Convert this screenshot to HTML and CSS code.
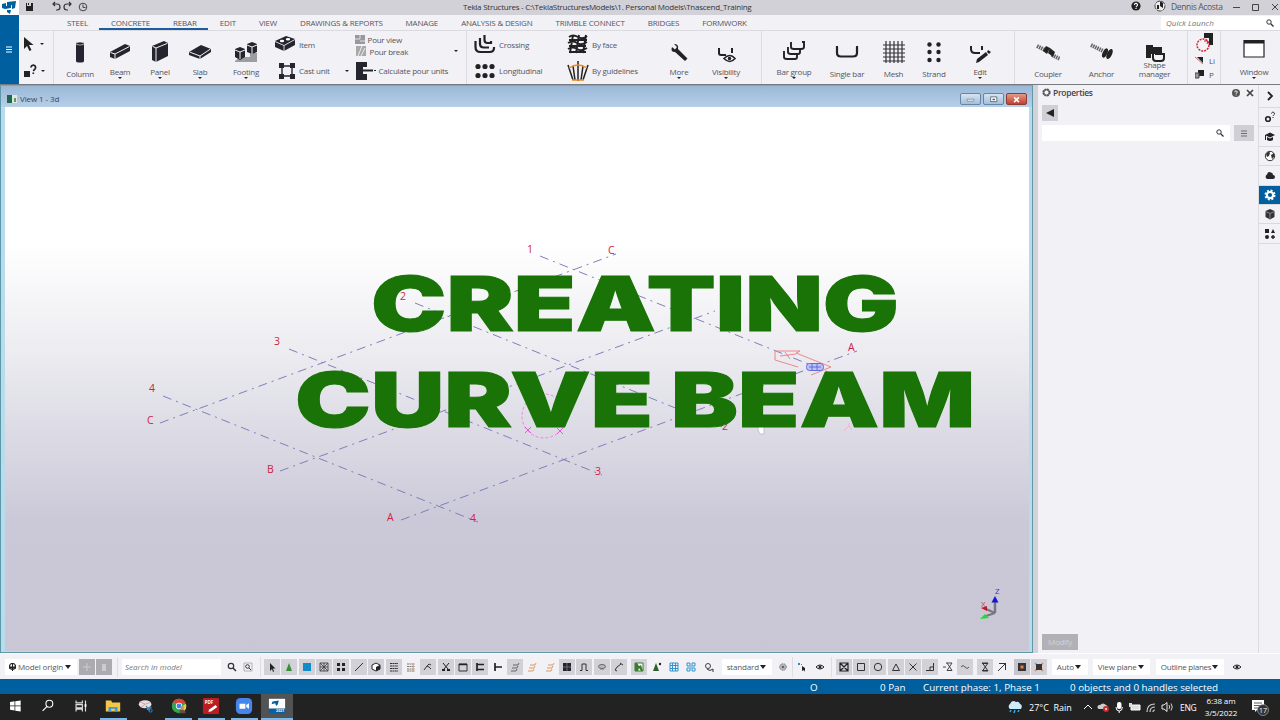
FILE: index.html
```html
<!DOCTYPE html>
<html lang="en">
  <head>
    <meta charset="UTF-8" />
    <meta name="viewport" content="width=device-width, initial-scale=1.0" />
    <title>Tekla Structures</title>
    <link rel="stylesheet" href="styles.css">
  </head>
  <body>
    <!-- Title bar -->
    <header class="titlebar">
      <svg class="logo" viewBox="0 0 19 15"><rect width="19" height="15" fill="#fff"/><path d="M7 2l9-1-1 7-3 1V5L7 6zM2 4l4-1v3l5-1v3l-6 1-3-1zM7 10h4l-1 4-3-2z" fill="#00609f"/></svg>
      <svg class="quick-icons" viewBox="0 0 72 12"><path d="M7 2h1v3h4V2h2v8H7zM9 2h1v2H9z" fill="#222"/><path d="M34 3h4a3 3 0 0 1 0 6h-1M36 1l-2 2 2 2M52 3h-4a3 3 0 0 0 0 6h1M50 1l2 2-2 2" fill="none" stroke="#333" stroke-width="1.2"/><circle cx="64" cy="6" r="3.800" fill="none" stroke="#444"/><path d="M64 3.500v3h2.500" fill="none" stroke="#444"/></svg>
      <div class="app-title">Tekla Structures - C:\TeklaStructuresModels\1. Personal Models\Tnascend_Training</div>
      <div class="account">
        <svg width="10" height="10" viewBox="0 0 10 10"><circle cx="5" cy="5" r="4.600" fill="#222"/><path d="M3.500 4a1.500 1.500 0 1 1 2 1.300l-.5.8M5 7v1" fill="none" stroke="#fff" stroke-width="1.100"/></svg>
        <svg width="12" height="12" viewBox="0 0 12 12"><circle cx="6" cy="6" r="5" fill="#eee" stroke="#444" stroke-dasharray="5 1"/><path d="M6 1l3 2v5L6 6zM3 5h2v4H3z" fill="#222"/></svg>
        <span>Dennis Acosta</span>
      </div>
      <svg class="win-controls" viewBox="0 0 50 12"><path d="M3 5.500h7M22.500 2.500h6v6h-6zM42 2l6 6M48 2l-6 6" fill="none" stroke="#333" stroke-width=".9"/></svg>
    </header>

    <!-- Ribbon -->
    <div class="ribbon">
      <div class="file-menu"><svg width="7" height="7" viewBox="0 0 7 7"><path d="M0 1h6M0 3.500h6M0 6h6" stroke="#fff"/></svg></div>
      <div class="ribbon-main">
        <nav class="tabs">
          <span>STEEL</span><span class="on">CONCRETE</span><span class="on">REBAR</span><span>EDIT</span><span>VIEW</span><span>DRAWINGS &amp; REPORTS</span><span>MANAGE</span><span>ANALYSIS &amp; DESIGN</span><span>TRIMBLE CONNECT</span><span>BRIDGES</span><span>FORMWORK</span>
          <div class="quick-launch">Quick Launch<svg width="8" height="8" viewBox="0 0 8 8"><circle cx="3" cy="3" r="2.200" fill="none" stroke="#333"/><path d="M4.700 4.700L7.500 7.500" stroke="#333" stroke-width="1.300"/></svg></div>
        </nav>
        <div class="tools">
          <div class="group select-group">
            <div class="row"><svg width="12" height="16" viewBox="0 0 12 16"><path d="M1 1v12l3-3 2.500 5 2-1L6 9h4.500z" fill="#222"/></svg><i class="caret"></i></div>
            <div class="row"><svg width="15" height="16" viewBox="0 0 15 16"><path d="M1 8h6v6H1z" fill="#222"/><path d="M8 4.500a2.300 2.300 0 1 1 3.500 2l-1.200 1.500M10.300 9.500v1.500" fill="none" stroke="#222" stroke-width="1.700"/></svg><i class="caret"></i></div>
          </div>
          <div class="group parts-group">
            <div class="tool w40"><svg class="ico" viewBox="0 0 24 24"><path d="M8 4.500h8V21H8z" fill="#25252f"/><ellipse cx="12" cy="21" rx="4" ry="1.500" fill="#25252f"/><ellipse cx="12" cy="3.500" rx="4" ry="1.500" fill="#25252f" stroke="#f2f1f6" stroke-width=".6"/></svg><span>Column</span></div>
            <div class="tool w40 drop"><svg class="ico" viewBox="0 0 24 24"><path d="M2 12l15-8 5 2v5L7 19l-5-2z" fill="#25252f"/><path d="M2.500 12.500l4.500 1.500L21.500 6.500M7 14v5" stroke="#f2f1f6" fill="none"/></svg><span>Beam</span></div>
            <div class="tool w40 drop"><svg class="ico" viewBox="0 0 24 24"><path d="M4 6l12-5 4 2v13L8 22l-4-2z" fill="#25252f"/><path d="M4.500 6.300L8 8l11.500-4.700M8 8v14" stroke="#f2f1f6" fill="none"/></svg><span>Panel</span></div>
            <div class="tool w40 drop"><svg class="ico" viewBox="0 0 24 24"><path d="M1 12l12-7 10 4v3l-11 7-11-4z" fill="#25252f"/><path d="M1.500 12l10.500 4L22.500 9M12 16v3" stroke="#f2f1f6" fill="none"/></svg><span>Slab</span></div>
            <div class="tool w52 drop"><svg class="ico" viewBox="0 0 24 24"><path d="M1 21l5-4h10V13h7v9H1z" fill="#9c9ca3"/><path d="M1 9l5-2 5 2v8l-5 3-5-3zM13 4l5-2 5 2v8l-5 2-5-2z" fill="#25252f"/><path d="M1 10l5 2 5-2M6 12v7M13 5l5 2 5-2M18 7v7" fill="none" stroke="#f2f1f6"/></svg><span>Footing</span></div>
            <div class="stack item-stack">
              <div class="row"><svg width="22" height="18" viewBox="0 0 22 18"><path d="M1 6l11-5 9 3v6l-11 6-9-4z" fill="#25252f"/><path d="M1 6.500l9 4 11-6M10 10.500v6" stroke="#fff" fill="none" stroke-width=".8"/><ellipse cx="8" cy="6" rx="2.200" ry="1.200" fill="#fff"/><ellipse cx="14" cy="4.200" rx="2.200" ry="1.200" fill="#fff"/></svg><span>Item</span></div>
              <div class="row cast"><svg width="18" height="18" viewBox="0 0 18 18"><path d="M4 4h10v10H4z" fill="none" stroke="#25252f" stroke-width="1.400"/><path d="M1 1h5v5H1zM12 1h5v5h-5zM1 12h5v5H1zM12 12h5v5h-5z" fill="#25252f"/></svg><span>Cast unit</span><i class="caret"></i></div>
            </div>
            <div class="stack pour-stack">
              <div class="pour-rows">
                <div class="mini"><svg width="10" height="10" viewBox="0 0 10 10"><path d="M0 1h10v9H0z" fill="#999"/><path d="M0 5h5V1M5 7h5" stroke="#ddd" fill="none"/></svg><span>Pour view</span></div>
                <div class="mini second"><svg width="10" height="10" viewBox="0 0 10 10"><path d="M0 0h10v10H0z" fill="#a8a8a8"/><path d="M2 10L6 0M5 10l4-8" stroke="#eee" fill="none"/></svg><span>Pour break</span><i class="caret"></i></div>
              </div>
              <div class="row calc"><svg width="20" height="20" viewBox="0 0 20 20"><path d="M0 1h11v5H7v7h4v6H0z" fill="#25252f"/><path d="M6 9.500h11" stroke="#25252f" stroke-width="2"/><path d="M18 9.500h2" stroke="#25252f"/></svg><span>Calculate pour units</span></div>
            </div>
          </div>
          <div class="group rebar-group">
            <div class="stack cross-stack">
              <div class="row"><svg width="22" height="20" viewBox="0 0 22 20"><path d="M1.500 7v6q0 5 5 5h9q4.500 0 4.500-4v-1M6 4v6q0 3.500 4 3.500h5M10.500 1v5q0 3 3 3h3.500v-2" fill="none" stroke="#222" stroke-width="2.200"/></svg><span>Crossing</span></div>
              <div class="row"><svg width="22" height="18" viewBox="0 0 22 18"><g fill="#222"><circle cx="4" cy="4.500" r="2.600"/><circle cx="11" cy="4.500" r="2.600"/><circle cx="18" cy="4.500" r="2.600"/><circle cx="4" cy="13.500" r="2.600"/><circle cx="11" cy="13.500" r="2.600"/><circle cx="18" cy="13.500" r="2.600"/></g></svg><span>Longitudinal</span></div>
            </div>
            <div class="stack face-stack">
              <div class="row"><svg width="22" height="20" viewBox="0 0 22 20"><path d="M2 3q4-3 9 0t9-1M1 9q5-3 9 0t10-1M1 15q5-3 9 0t10-1M6 1L3 19M12 1L9 19M19 1l-3 18M2 6h18M2 12h17M2 18h17" fill="none" stroke="#222" stroke-width="1.900"/></svg><span>By face</span></div>
              <div class="row"><svg width="22" height="22" viewBox="0 0 22 22"><path d="M1 5l5 15M21 5l-5 15M11 1v20M6 6l2 14M16 6l-2 14" stroke="#222" stroke-width="1.500"/><path d="M2 8q9-6 18 0M5 20h12" stroke="#ef8b1d" stroke-width="1.500" fill="none"/></svg><span>By guidelines</span></div>
            </div>
            <div class="tool w40 drop"><svg class="ico" viewBox="0 0 24 24"><path d="M5 7q-2 5 3 5l10 9 2.500-2.500L11 9q1-5-4-5l3 3-2 2.500z" fill="#222"/></svg><span>More</span></div>
            <div class="tool w54 drop"><svg class="ico" viewBox="0 0 24 24"><path d="M5 8v5q0 2 2 2h5M18 8v5" stroke="#222" stroke-width="2" fill="none"/><path d="M10 18.500q6-6 11 0-5 6-11 0z" fill="#fff" stroke="#222" stroke-width="1.600"/><circle cx="15.500" cy="18.500" r="1.800" fill="#222"/></svg><span>Visibility</span></div>
          </div>
          <div class="group bars-group">
            <div class="tool w56 drop"><svg class="ico" viewBox="0 0 24 24"><path d="M2 11v6q0 2 3 2h8q2 0 2-2v-3M6 7v5q0 2 3 2h7q2 0 2-2V9M9 2v5q0 2 3 2h7q3 0 3-2V2h-2" fill="none" stroke="#222" stroke-width="1.900"/></svg><span>Bar group</span></div>
            <div class="tool w50"><svg class="ico" viewBox="0 0 24 24"><path d="M3 7H2v6q0 3.500 4 3.500h12q4 0 4-3.500V7h-1" fill="none" stroke="#222" stroke-width="2.200"/></svg><span>Single bar</span></div>
            <div class="tool w43"><svg class="ico" viewBox="0 0 24 24"><path d="M1 5h22M1 9h22M1 13h22M1 17h22M1 21h22M4 1v22M8 1v22M12 1v22M16 1v22M20 1v22" stroke="#333" stroke-width="1.200"/></svg><span>Mesh</span></div>
            <div class="tool w38"><svg class="ico" viewBox="0 0 24 24"><g fill="#222"><circle cx="7.500" cy="4.500" r="2.200"/><circle cx="16.500" cy="4.500" r="2.200"/><circle cx="7.500" cy="12" r="2.200"/><circle cx="16.500" cy="12" r="2.200"/><circle cx="7.500" cy="20" r="2.200"/><circle cx="16.500" cy="20" r="2.200"/></g></svg><span>Strand</span></div>
            <div class="tool w54 drop"><svg class="ico" viewBox="0 0 24 24"><path d="M3 6v3q0 4 4 4h5M14 6v4" stroke="#222" stroke-width="2" fill="none"/><path d="M8 23l1-4 9-7 2 3-9 7zM20 10l3 2-2 2-2-2z" fill="#222"/></svg><span>Edit</span></div>
          </div>
          <div class="group joint-group">
            <div class="tool w54"><svg class="ico" viewBox="0 0 24 24"><path d="M1 6l8 4M16 15l8 4" stroke="#666" stroke-width="4" stroke-dasharray="1.500 .8"/><path d="M7 11l3-5 4 2-3 6zM12 13l2-5 5 4-2 5z" fill="#222"/></svg><span>Coupler</span></div>
            <div class="tool w53"><svg class="ico" viewBox="0 0 24 24"><path d="M1 5l12 6" stroke="#666" stroke-width="4" stroke-dasharray="1.500 .8"/><ellipse cx="15" cy="13" rx="2.300" ry="5" transform="rotate(25 15 13)" fill="#222"/><ellipse cx="19.500" cy="14" rx="2.500" ry="5.500" transform="rotate(25 19.500 14)" fill="#222"/></svg><span>Anchor</span></div>
            <div class="tool w53 two-line"><svg class="ico" viewBox="0 0 24 24"><path d="M3 5h7v2h9v8H9v3H3z" fill="#222"/><path d="M10 14v4q0 3 3 3h5q3 0 3-3v-4h-2" fill="none" stroke="#f2f1f6" stroke-width="4"/><path d="M10 14v4q0 3 3 3h5q3 0 3-3v-4h-2" fill="none" stroke="#222" stroke-width="2"/></svg><span>Shape<br>manager</span></div>
          </div>
          <div class="group cut-group">
            <svg width="20" height="22" viewBox="0 0 20 22"><path d="M9 1h9v12h-4V6H9z" fill="#222"/><circle cx="8" cy="13" r="6" fill="#f7f2f5" stroke="#cf2736" stroke-width="1.500" stroke-dasharray="2 1"/><path d="M9 9h4l-1 3" stroke="#cf2736" fill="none"/></svg>
            <div class="cut-row"><svg width="9" height="9" viewBox="0 0 9 9"><path d="M2 1h6v6z" fill="#222"/><path d="M0 1l8 7" stroke="#c66"/></svg><span>Li</span></div>
            <div class="cut-row"><svg width="9" height="9" viewBox="0 0 9 9"><path d="M3 0h6v6H3z" fill="#222"/><path d="M0 3h4v5H0z" fill="#999" stroke="#444"/></svg><span>P</span></div>
          </div>
          <div class="group window-group">
            <div class="tool w58 drop"><svg class="ico" viewBox="0 0 24 24"><path d="M2 0h20v17H2z" fill="#fff" stroke="#222" stroke-width="1.200"/><path d="M2 0h20v3.500H2z" fill="#222"/></svg><span>Window</span></div>
          </div>
        </div>
      </div>
    </div>

    <!-- Workspace -->
    <main class="workspace">
      <section class="view-window">
        <div class="view-title">
          <svg width="11" height="8" viewBox="0 0 11 8"><path d="M0 0h10v8H0z" fill="#dce9e4"/><path d="M0 0h5v8H0z" fill="#27644f"/><path d="M7 3h2v4H7z" fill="#5a9a60"/></svg>
          <span>View 1 - 3d</span>
          <div class="view-buttons">
            <b><svg viewBox="0 0 20 12"><path d="M6.500 5.500h7v2h-7z" fill="#fff" stroke="#566" stroke-width=".6"/></svg></b>
            <b><svg viewBox="0 0 20 12"><path d="M7 3h6.500v5H7z" fill="#fff" stroke="#456" stroke-width=".8"/><path d="M9 5h2.500v1.500H9z" fill="#456"/></svg></b>
            <b class="close"><svg viewBox="0 0 20 12"><path d="M7.500 3.500l5 5M12.500 3.500l-5 5" stroke="#fff" stroke-width="1.700"/></svg></b>
          </div>
        </div>
        <svg class="canvas" viewBox="5 107 1024 544">
          <!-- grid lines -->
          <g class="grid-lines">
            <path d="M163 396L478 522M289 349L602 475M415 303L725 428M540 256L848 380"/>
            <path d="M160 423L616 254M280 471L715 311M401 520L857 351"/>
          </g>
          <g class="grid-labels">
            <text x="149" y="392">4</text><text x="274" y="345">3</text><text x="400" y="300">2</text><text x="527" y="253">1</text>
            <text x="147" y="424">C</text><text x="267" y="473">B</text><text x="387" y="521">A</text>
            <text x="608" y="254">C</text><text x="848" y="351">A</text><text x="470" y="522">4</text><text x="595" y="475">3</text><text x="722" y="430">2</text>
          </g>
          <!-- work area arrow and curve picks -->
          <path d="M798 367L775 360V351H800L796 353L831 367L811 375M780 356L796 354M785 352L790 359" fill="none" stroke="#ee8890"/>
          <rect x="806.500" y="363.500" width="17" height="7" rx="3" fill="#bcc3f3" stroke="#646be0"/>
          <path d="M809 367h12M812 364v6M817 364v6" stroke="#5259d9" stroke-width=".8"/>
          <circle cx="544" cy="416" r="22" fill="none" stroke="#e08bd9" stroke-dasharray="3 2"/>
          <path d="M525 427l6 6M531 427l-6 6M557 428l6 6M563 428l-6 6M525 402l5-3" stroke="#ec55e2"/>
          <path d="M849 423v3l-5 5M849 426l3 4" stroke="#eeb6c2" fill="none"/>
          <path d="M758 426h6v8h-4l-2-4z" fill="#fff" stroke="#aaa" stroke-width=".6"/>
          <!-- headline -->
          <g class="headline">
            <text x="371" y="330.500" textLength="528" lengthAdjust="spacingAndGlyphs">CREATING</text>
            <text x="295" y="426.500" textLength="358" lengthAdjust="spacingAndGlyphs">CURVE</text>
            <text x="671" y="426.500" textLength="304" lengthAdjust="spacingAndGlyphs">BEAM</text>
          </g>
          <!-- axes -->
          <path d="M995 613V601" stroke="#77777f" stroke-width="2.500"/>
          <path d="M995 613l-9-4M995 613l-9 3" stroke="#77777f" stroke-width="2"/>
          <path d="M995 596l3.500 6.500h-7z" fill="#1414d2"/><path d="M980 619l5-5 4 4z" fill="#25dc35"/><path d="M981 608l6-2v5z" fill="#c01825"/>
          <text x="995" y="594" class="axis z">Z</text><text x="981" y="607" class="axis x">X</text>
        </svg>
      </section>

      <aside class="properties">
        <div class="panel-title">
          <svg width="9" height="9" viewBox="0 0 9 9"><circle cx="4.500" cy="4.500" r="3.300" fill="none" stroke="#555" stroke-width="1.600" stroke-dasharray="2 .6"/><circle cx="4.500" cy="4.500" r="2.600" fill="none" stroke="#555"/></svg>
          <strong>Properties</strong>
          <svg width="8" height="8" viewBox="0 0 10 10"><circle cx="5" cy="5" r="5" fill="#555"/><path d="M3.500 4a1.500 1.500 0 1 1 2 1.300l-.5.8M5 7v1" fill="none" stroke="#fff" stroke-width="1.200"/></svg>
          <svg width="8" height="8" viewBox="0 0 8 8"><path d="M1 1l6 6M7 1L1 7" stroke="#444" stroke-width="1.700"/></svg>
        </div>
        <div class="back"><svg width="8" height="8" viewBox="0 0 8 8"><path d="M0 4l8-4v8z" fill="#222"/></svg></div>
        <div class="panel-search">
          <div class="search-box"><svg width="8" height="8" viewBox="0 0 8 8"><circle cx="3" cy="3" r="2.200" fill="none" stroke="#333"/><path d="M4.700 4.700L7.500 7.500" stroke="#333" stroke-width="1.300"/></svg></div>
          <div class="list-button"><svg width="6" height="7" viewBox="0 0 6 7"><path d="M0 1h6M0 3.500h6M0 6h6" stroke="#555" stroke-width=".8"/></svg></div>
        </div>
        <div class="modify">Modify</div>
      </aside>

      <div class="side-tabs">
        <b><svg viewBox="0 0 12 12"><path d="M4 2l4 4-4 4" fill="none" stroke="#222" stroke-width="1.800"/></svg></b>
        <b><svg viewBox="0 0 12 12"><circle cx="4" cy="8" r="2.300" fill="none" stroke="#222" stroke-width="1.600"/><path d="M7.500 2.500a1.500 1.500 0 1 1 2.200 1.500l-.7.8M9 6v1" fill="none" stroke="#222"/></svg></b>
        <b><svg viewBox="0 0 12 12"><path d="M1 4l5-2.500L11 4 6 6.500zM3 6l3 1.500L9 6v3q-3 2-6 0zM1 4h1v5H1z" fill="#222"/></svg></b>
        <b><svg viewBox="0 0 12 12"><circle cx="6" cy="6" r="4.700" fill="#fff" stroke="#333"/><path d="M2 4q3-4 4-1l-1 3-2 1zM7 5l3-2v4L8 9z" fill="#333"/></svg></b>
        <b><svg viewBox="0 0 12 12"><path d="M3 10a2.500 2.500 0 0 1 0-4.500q1-3.500 4-2 2 0 2 2.500 2 0 2 2t-2 2z" fill="#25252f"/></svg></b>
        <b class="active"><svg viewBox="0 0 12 12"><circle cx="6" cy="6" r="4.500" fill="none" stroke="#fff" stroke-width="2" stroke-dasharray="2 1.530"/><circle cx="6" cy="6" r="3.100" fill="none" stroke="#fff" stroke-width="2"/></svg></b>
        <b><svg viewBox="0 0 12 12"><path d="M6 1l4.500 2v6L6 11.500 1.500 9V3z" fill="#333"/><path d="M1.500 3.500L6 5.500l4.500-2M6 5.500v6" stroke="#aaa" stroke-width=".7" fill="none"/></svg></b>
        <b><svg viewBox="0 0 12 12"><path d="M1 1h4v4H1zM9 1l2 4H7zM8.300 7h1.400v1.300H11v1.400H9.700V11H8.300V9.700H7V8.300h1.300z" fill="#222"/><circle cx="3" cy="9" r="2" fill="#222"/></svg></b>
      </div>
    </main>

    <!-- Selection and snapping toolbar -->
    <div class="bottom-tools">
      <div class="field origin"><svg width="7" height="8" viewBox="0 0 7 8"><circle cx="3.500" cy="3.500" r="3" fill="none" stroke="#222" stroke-width="1.200"/><path d="M0 3.500h7v2H0zM3 1h1v7H3z" fill="#222"/></svg>Model origin<i class="caret"></i></div>
      <b class="grey"><svg viewBox="0 0 16 16"><path d="M8 4v8M4 8h8" stroke="#ccc"/></svg></b>
      <b class="grey"><svg viewBox="0 0 16 16"><path d="M6 5h4v7H6z" fill="#ccc"/></svg></b>
      <i class="sep"></i>
      <div class="field model-search">Search in model</div>
      <b class="plain"><svg viewBox="0 0 16 16"><circle cx="7" cy="7" r="2.700" fill="none" stroke="#333" stroke-width="1.200"/><path d="M9 9l3 3" stroke="#333" stroke-width="1.500"/></svg></b>
      <b class="plain"><svg viewBox="0 0 16 16"><path d="M4 4h8v8H4z" fill="none" stroke="#999" stroke-width=".7"/><circle cx="7.500" cy="7.500" r="1.800" fill="none" stroke="#333"/><path d="M9 9l2 2" stroke="#333"/></svg></b>
      <i class="sep wide"></i>
      <div class="buttons">
        <b><svg viewBox="0 0 16 16"><path d="M6 4v8l2-2 1 3 1-.6L9 9.500h2.500z" fill="#222"/></svg></b>
        <b><svg viewBox="0 0 16 16"><path d="M8 4l3 8H5z" fill="#3c8b35"/></svg></b>
        <b><svg viewBox="0 0 16 16"><path d="M4 4h8v8H4z" fill="#148bc9"/></svg></b>
        <b><svg viewBox="0 0 16 16"><path d="M4 4h8v8H4zM4 8h8M8 4v8M4 4l8 8M12 4l-8 8" fill="none" stroke="#444" stroke-width=".9"/></svg></b>
        <b><svg viewBox="0 0 16 16"><path d="M4 4h3v3H4zM9 4h3v3H9zM4 9h3v3H4zM9 9h3v3H9z" fill="#222"/></svg></b>
        <b><svg viewBox="0 0 16 16"><path d="M4 12l8-8" stroke="#333"/></svg></b>
        <b><svg viewBox="0 0 16 16"><path d="M8 4l4 2v4l-4 2-4-2V6z" fill="#fff" stroke="#222"/><path d="M8 8l4-2v4l-4 2z" fill="#222"/></svg></b>
        <b><svg viewBox="0 0 16 16"><path d="M4 4.500h8M4 7h8M4 9.500h8M4 12h8" stroke="#333" stroke-dasharray="2 .4"/></svg></b>
        <b class="plain"><svg viewBox="0 0 16 16"><path d="M4 5h8M4 7.500h8M4 10h8M4 12h8" stroke="#777" stroke-dasharray="2 .5"/><path d="M10 5v7" stroke="#eba56b"/></svg></b>
        <b><svg viewBox="0 0 16 16"><path d="M4 11l3-4 2 1 2 2M7 7l2-2 2 1" stroke="#333" fill="none"/></svg></b>
        <b><svg viewBox="0 0 16 16"><path d="M5 4l5 6M11 4l-5 6" stroke="#222"/><path d="M4 10h3v2H4zM9 10h3v2H9z" fill="#222"/></svg></b>
        <b><svg viewBox="0 0 16 16"><path d="M4 5h8v7H4z" fill="none" stroke="#333"/><path d="M4 5.500h8" stroke="#222" stroke-width="1.500"/></svg></b>
        <b><svg viewBox="0 0 16 16"><path d="M5 4v8M5 5.500h7M5 10.500h7" stroke="#222" stroke-width="1.700"/></svg></b>
        <b class="plain"><svg viewBox="0 0 16 16"><path d="M5 4v8M5 8h7" stroke="#222" stroke-width="1.700"/></svg></b>
        <b><svg viewBox="0 0 16 16"><path d="M12 4l-1 2H6M11 7l-1 2H5M10 10l-1 2H4" stroke="#666" fill="none"/></svg></b>
        <b class="plain"><svg viewBox="0 0 16 16"><path d="M12 4l-1 2H6M11 7l-1 2H5M10 10l-1 2H4" stroke="#e1975d" fill="none"/></svg></b>
        <b class="plain"><svg viewBox="0 0 16 16"><path d="M12 4l-1 2H6M11 7l-1 2H5M10 10l-1 2H4" stroke="#e1975d" fill="none"/></svg></b>
        <b><svg viewBox="0 0 16 16"><path d="M4 4h8v8H4z" fill="#25252f"/><path d="M4 8h8M8 4v8" stroke="#888" stroke-width=".7"/></svg></b>
        <b><svg viewBox="0 0 16 16"><path d="M4 11.500h2V5h4v6.500h2" stroke="#333" fill="none"/></svg></b>
        <b><svg viewBox="0 0 16 16"><ellipse cx="8" cy="7.500" rx="3.500" ry="2" fill="#bbb" stroke="#666"/><path d="M6 10h4" stroke="#777"/></svg></b>
        <b><svg viewBox="0 0 16 16"><path d="M4 11l2-3 4-3M4 11l2 1M9 4l3 2" stroke="#333" fill="none"/></svg></b>
      </div>
      <div class="buttons second-set">
        <b><svg viewBox="0 0 16 16"><path d="M4 4h8v8H4z" fill="#fff" stroke="#3a7c2e"/><path d="M4 12V4h2l2 3 2-1 2 6h-2l-2-3-1 3z" fill="#3a7c2e"/></svg></b>
        <b class="plain"><svg viewBox="0 0 16 16"><path d="M7 4l3 8H4z" fill="#315e2e"/><circle cx="11" cy="5" r="1.200" fill="#222"/></svg></b>
        <b class="plain"><svg viewBox="0 0 16 16"><path d="M4 4h8v8H4zM6.500 4v8M9.500 4v8M4 6.500h8M4 9.500h8" fill="none" stroke="#3293cf"/></svg></b>
        <b class="plain"><svg viewBox="0 0 16 16"><path d="M4 4h3v3H4zM9 4h3v3H9zM4 9h3v3H4zM9 9h3v3H9zM7 8h2" fill="none" stroke="#3293cf"/></svg></b>
        <b class="plain"><svg viewBox="0 0 16 16"><circle cx="7" cy="7" r="2.500" fill="none" stroke="#444"/><path d="M6 10q3 3 6 0v3" fill="none" stroke="#333"/></svg></b>
      </div>
      <div class="field standard">standard<i class="caret"></i></div>
      <b class="plain"><svg viewBox="0 0 16 16"><circle cx="8" cy="8" r="3.300" fill="#bbb" stroke="#777" stroke-dasharray="1.500 .8"/><circle cx="8" cy="8" r="1.300" fill="#666"/></svg></b>
      <i class="sep tight"></i>
      <b class="plain"><svg viewBox="0 0 16 16"><path d="M4 4h2v2H4zM7 5h1v1H7z" fill="#208ccc"/><path d="M8 7v5l2-1 1 2V9z" fill="#222"/></svg></b>
      <b class="plain eye"><svg viewBox="0 0 16 16"><path d="M4 8q4-4 8 0-4 4-8 0z" fill="#fff" stroke="#222"/><circle cx="8" cy="8" r="1.500" fill="#222"/></svg></b>
      <i class="sep snaps"></i>
      <div class="buttons">
        <b><svg viewBox="0 0 16 16"><path d="M4 4h8v8H4zM4 4l8 8M12 4l-8 8" fill="none" stroke="#222" stroke-width="1.200"/></svg></b>
        <b><svg viewBox="0 0 16 16"><path d="M4.500 4.500h7v7h-7z" fill="none" stroke="#333"/></svg></b>
        <b><svg viewBox="0 0 16 16"><circle cx="8" cy="8" r="3.700" fill="none" stroke="#333"/></svg></b>
        <b><svg viewBox="0 0 16 16"><path d="M8 5l3.500 6.500h-7z" fill="none" stroke="#333"/></svg></b>
        <b><svg viewBox="0 0 16 16"><path d="M4.500 4.500l7 7M11.500 4.500l-7 7" stroke="#333"/></svg></b>
        <b><svg viewBox="0 0 16 16"><path d="M11.500 4v7.500H4M8 11V8h3" fill="none" stroke="#333"/></svg></b>
        <b class="plain"><svg viewBox="0 0 16 16"><path d="M6 4h6L7 11.500h5L7 4M3 8h3" fill="none" stroke="#444"/></svg></b>
        <b><svg viewBox="0 0 16 16"><path d="M4 8q2-3 4 0t4 0" fill="none" stroke="#555"/></svg></b>
      </div>
      <div class="buttons snap-two">
        <b><svg viewBox="0 0 16 16"><path d="M5 4h6L5.500 12h5.500L5.500 4M5 4.500h6M5 11.500h6" fill="none" stroke="#333"/></svg></b>
        <b class="plain"><svg viewBox="0 0 16 16"><path d="M5 4.500h6.500V11M12 4l-8 8" fill="none" stroke="#333"/></svg></b>
      </div>
      <div class="buttons snap-two">
        <b class="pressed"><svg viewBox="0 0 16 16"><path d="M4 4h8v8H4z" fill="#33333b"/><path d="M6.500 6.500h3v3h-3z" fill="#ee7f33"/></svg></b>
        <b><svg viewBox="0 0 16 16"><path d="M4 4l8 8M12 4l-8 8" stroke="#e2843b" stroke-width="1.500"/><path d="M5 5h6v6H5z" fill="#33333b"/></svg></b>
      </div>
      <div class="field auto">Auto<i class="caret"></i></div>
      <div class="field plane">View plane<i class="caret"></i></div>
      <div class="field outline">Outline planes<i class="caret"></i></div>
      <b class="plain"><svg viewBox="0 0 16 16"><path d="M4 8q4-4 8 0-4 4-8 0z" fill="#fff" stroke="#222"/><circle cx="8" cy="8" r="1.500" fill="#222"/></svg></b>
    </div>

    <div class="statusbar">
      <span class="st-o">O</span><span class="st-pan">0 Pan</span><span class="st-phase">Current phase: 1, Phase 1</span><span class="st-objects">0 objects and 0 handles selected</span>
    </div>

    <!-- Windows taskbar -->
    <footer class="taskbar">
      <div class="apps">
        <b><svg viewBox="0 0 20 20"><path d="M4.500 5.500l5-.7v4.700h-5zM10.300 4.700l6-.8v5.600h-6zM4.500 10.300h5V15l-5-.7zM10.300 10.300h6V16l-6-.8z" fill="#fff"/></svg></b>
        <b><svg viewBox="0 0 20 20"><circle cx="11.500" cy="7.500" r="3.800" fill="none" stroke="#fff" stroke-width="1.200"/><path d="M9 10.500L4 15.500" stroke="#fff" stroke-width="1.300"/></svg></b>
        <b><svg viewBox="0 0 20 20"><path d="M4.500 4v2.500h7V4M4.500 16v-2.500h7V16M4.500 8.500h7v3.500h-7zM15 4v12" fill="none" stroke="#ddd" stroke-width="1.300"/><path d="M14 8h2v3h-2z" fill="#fff"/></svg></b>
        <b class="running"><svg viewBox="0 0 20 20"><path d="M2 4h6l1 2h9v10H2z" fill="#f4c74a"/><path d="M5 16v-5h10v5h-3v-3H8v3z" fill="#3c9ed9"/></svg></b>
        <b><svg viewBox="0 0 20 20"><ellipse cx="9" cy="8" rx="7" ry="4.500" fill="#e9dfdf"/><path d="M9 8L3 5M9 8l6-2M9 8l-5 4" stroke="#cc8b8b" stroke-width=".8"/><path d="M10 10l4 5M16 11l-5 3" stroke="#3b93ce" stroke-width="1.500"/><circle cx="15" cy="15" r="1.800" fill="none" stroke="#3b93ce"/></svg></b>
        <b class="running"><svg viewBox="0 0 20 20"><circle cx="10" cy="10" r="8" fill="#32a753"/><path d="M3 6a8 8 0 0 1 14.500 1H10z" fill="#df4333"/><path d="M17.700 7.500A8 8 0 0 1 10 18l4-8z" fill="#f7c838"/><path d="M3 6l5 7 3-1-4 5A8 8 0 0 1 3 6z" fill="#31a552"/><circle cx="10" cy="10" r="3.500" fill="#fff"/><circle cx="10" cy="10" r="2.700" fill="#3f84e8"/><circle cx="13.500" cy="12" r="2" fill="#b9927b"/><path d="M10 18q0-4 3.500-4t4 4z" fill="#654f3d"/></svg></b>
        <b class="running"><svg viewBox="0 0 20 20"><rect x="1" y="1" width="18" height="18" rx="1.500" fill="#ba1d22"/><text x="3" y="7.500" class="pdf">PDF</text><path d="M8 14l7-5 2 2-7 5-3 .5z" fill="#fff"/></svg></b>
        <b class="running"><svg viewBox="0 0 20 20"><rect x="1" y="1" width="18" height="18" rx="5" fill="#4586ed"/><path d="M5 7.500h6.500v5.500H5zM12.500 9l3-2v6l-3-2z" fill="#fff"/></svg></b>
        <b class="running current"><svg viewBox="0 0 20 20"><path d="M1 2h18v11H1z" fill="#fff"/><path d="M1 13h18v5H1z" fill="#075fa2"/><path d="M5 5l7-1-1 4-2 2-1-3-4 1z" fill="#075fa2"/><text x="9" y="17" class="year">2021</text></svg></b>
      </div>
      <div class="tray">
        <svg class="weather" viewBox="0 0 16 14"><path d="M3 9a3 3 0 0 1 0-5q2-5 6-2 3-1 4 2 3 1 1 5z" fill="#cfeaf7"/><path d="M4 10l-1 2M8 10l-1 3M12 10l-1 2" stroke="#39a9e3" stroke-width="1.500"/></svg>
        <span class="temp">27°C&nbsp; Rain</span>
        <svg class="tray-icons" viewBox="0 0 94 14">
          <path d="M1 9l4-4 4 4" fill="none" stroke="#fff"/>
          <path d="M16 9a2 2 0 0 1 1-4q3-3 6 0 3 1 1 4z" fill="#ccc"/><circle cx="23" cy="9" r="3" fill="#c92c2d"/><path d="M22 8l2 2M24 8l-2 2" stroke="#fff" stroke-width=".7"/>
          <rect x="34" y="2" width="4.500" height="7" rx="2" fill="#fff"/><path d="M33 7q0 4 3.200 4t3.200-4M36.200 11v2" stroke="#fff" fill="none"/>
          <path d="M48 5h9v5h-9z" fill="#ddd" stroke="#fff"/><path d="M46 3h3v4h-3z" fill="#ddd"/>
          <path d="M64 12q0-8 8-8M67 12q0-5 5-5M70 12q0-2 2-2" fill="none" stroke="#ccc" stroke-width="1.200"/>
          <path d="M79 5h2l3-2.500v9L81 9h-2z" fill="none" stroke="#fff" stroke-width=".9"/><path d="M86 5q1.500 2 0 4M88 3.500q2.500 3.500 0 7" fill="none" stroke="#fff" stroke-width=".8"/>
        </svg>
        <span class="lang">ENG</span>
        <div class="clock">6:38 am<br>3/5/2022</div>
        <svg class="notes" viewBox="0 0 20 18"><path d="M1 2h12v10H6l-2 2v-2H1z" fill="#fff"/><path d="M3 5h8M3 7.500h8M3 10h5" stroke="#333" stroke-width=".8"/><circle cx="12" cy="12" r="5.500" fill="#333" stroke="#aaa" stroke-width=".7"/><text x="12" y="14.800" class="count">17</text></svg>
      </div>
    </footer>
  </body>
</html>
```
FILE: styles.css
```css
* {
  box-sizing: border-box;
}
body {
  margin: 0;
  width: 1280px;
  height: 720px;
  overflow: hidden;
  display: flex;
  flex-direction: column;
  font-family: "Open Sans", "Noto Sans", sans-serif;
  font-size: 8px;
  letter-spacing: -0.25px;
  color: #55555c;
  background: #f2f1f6;
}
svg {
  display: block;
  flex: none;
}
i,
b {
  font-style: normal;
  flex: none;
}
span,
.field {
  white-space: nowrap;
}
.caret {
  width: 0;
  height: 0;
  border: 2px solid transparent;
  border-top: 2.5px solid #222;
  border-bottom: 0;
}

/* Title bar */
.titlebar {
  height: 15px;
  flex: none;
  display: flex;
  align-items: center;
  background: #d2d1d7;
}
.logo {
  width: 19px;
  height: 15px;
}
.quick-icons {
  width: 72px;
  height: 12px;
  margin-top: -1px;
}
.app-title {
  padding-left: 372px;
  margin-top: -2px;
  line-height: 12px;
  white-space: nowrap;
  color: #333;
}
.account {
  display: flex;
  align-items: center;
  gap: 13px;
  margin-left: auto;
  font-size: 8.5px;
  letter-spacing: -0.35px;
  line-height: 11px;
  margin-top: -3px;
}
.account span {
  margin-left: -8px;
  width: 54px;
}
.win-controls {
  width: 50px;
  height: 12px;
  margin-left: 5px;
}

/* Ribbon */
.ribbon {
  height: 70px;
  flex: none;
  display: flex;
  border-bottom: 1px solid #777b80;
}
.file-menu {
  width: 19px;
  flex: none;
  background: #00609f;
  display: flex;
  align-items: center;
  justify-content: center;
}
.ribbon-main {
  width: 1261px;
}
.tabs {
  height: 16px;
  display: flex;
  align-items: center;
  padding-left: 36.5px;
  border-bottom: 1px solid #dbdae0;
  letter-spacing: -0.18px;
  line-height: 14px;
}
.tabs span {
  height: 15px;
  padding: 1px 11.5px 0;
}
.tabs .on {
  box-shadow: inset 0 -2px #1c5d9f;
}
.quick-launch {
  width: 119px;
  height: 14px;
  margin-left: auto;
  padding: 0 6px 0 5px;
  background: #fff;
  display: flex;
  align-items: center;
  justify-content: space-between;
  font-style: italic;
  letter-spacing: 0;
  color: #777;
}
.tools {
  height: 53px;
  display: flex;
}
.group {
  flex: none;
  display: flex;
  border-right: 1px solid #dcdbe1;
}
.select-group {
  width: 35px;
  flex-direction: column;
  padding-left: 4px;
}
.select-group .row {
  justify-content: space-between;
  padding-right: 9px;
}
.parts-group {
  width: 413px;
  padding-left: 6px;
}
.rebar-group {
  width: 295px;
  padding-left: 6px;
}
.bars-group {
  width: 253px;
  padding-left: 4px;
}
.joint-group {
  width: 173px;
  padding-left: 6px;
}
.tool {
  flex: none;
  padding-top: 9px;
  display: flex;
  flex-direction: column;
  align-items: center;
  line-height: 9px;
  text-align: center;
}
.tool span {
  margin-top: 5px;
}
.tool.drop span {
  margin-top: 3px;
}
.tool.drop::after {
  content: "";
  margin-top: 1px;
  border: 2px solid transparent;
  border-top: 2.5px solid #222;
  border-bottom: 0;
}
.tool.two-line span {
  margin-top: -4px;
}
.ico {
  width: 24px;
  height: 24px;
}
.w38 { width: 38px; }
.w40 { width: 40px; }
.w43 { width: 43px; }
.w50 { width: 50px; }
.w52 { width: 52px; }
.w53 { width: 53px; }
.w54 { width: 54px; }
.w56 { width: 56px; }
.w58 { width: 58px; }
.row {
  height: 26.5px;
  display: flex;
  align-items: center;
  gap: 3px;
}
.item-stack {
  width: 83px;
  padding-left: 2px;
}
.cast {
  padding-left: 4px;
}
.cast .caret {
  margin-left: 12px;
}
.pour-stack {
  width: 112px;
}
.pour-rows {
  height: 26.5px;
  padding-top: 2px;
}
.mini {
  height: 12px;
  display: flex;
  align-items: center;
  gap: 3px;
}
.mini.second {
  padding-left: 1px;
  gap: 4px;
}
.mini .caret {
  margin-left: 42px;
}
.calc {
  padding-left: 1px;
}
.cross-stack {
  width: 94px;
  padding-left: 1px;
}
.face-stack {
  width: 92px;
}
.cut-group {
  width: 33px;
  padding: 1px 0 0 7px;
  flex-direction: column;
}
.cut-row {
  height: 13.5px;
  display: flex;
  align-items: center;
  gap: 5px;
}
.window-group {
  border: 0;
  padding-left: 4px;
}

/* Workspace */
.workspace {
  height: 568px;
  flex: none;
  display: flex;
}
.view-window {
  width: 1033px;
  flex: none;
  padding: 0 4px;
  background: #b9dcec;
  border: 1px solid #5c98a7;
  border-top: 1px solid #8b9fae;
}
.view-title {
  height: 21px;
  margin: 0 -4px;
  padding: 4px 5px 0 6px;
  background: linear-gradient(#9ab8d6, #b7cfe9);
  display: flex;
  align-items: center;
  gap: 2px;
  letter-spacing: -0.1px;
  color: #444;
}
.view-buttons {
  display: flex;
  gap: 2px;
  margin-left: auto;
}
.view-buttons b {
  width: 21px;
  height: 12px;
  border: 1px solid #6686a5;
  border-radius: 2px;
  background: linear-gradient(#d5e4f2, #a5bfda);
}
.view-buttons .close {
  border-color: #8c3c34;
  background: linear-gradient(#e39a89, #c5402a);
}
.canvas {
  width: 1024px;
  height: 544px;
  letter-spacing: 0;
  background: linear-gradient(#fff 0, #fff 25%, #efeff3 42%, #cbc9d8 76%, #c9c7d6 100%);
}
.grid-lines {
  fill: none;
  stroke: #7f7fb9;
  stroke-width: 1;
  stroke-dasharray: 9 5 2 5;
}
.grid-labels {
  font: 10.5px "Open Sans", sans-serif;
  fill: #cf2344;
}
.headline {
  font: 900 76px Inter, sans-serif;
  fill: #197306;
  stroke: #197306;
  stroke-width: 1px;
}
.axis {
  font: 8px "Open Sans", sans-serif;
}
.axis.z {
  fill: #4338b3;
}
.axis.x {
  fill: #c1455b;
}

/* Properties panel */
.properties {
  width: 226px;
  flex: none;
  padding: 0 4px 0 4px;
  border-left: 5px solid #d3d2d9;
  border-right: 1px solid #dcdbe1;
  display: flex;
  flex-direction: column;
}
.panel-title {
  height: 15px;
  display: flex;
  align-items: center;
  gap: 6px;
  color: #444;
}
.panel-title strong {
  flex: 1;
  margin-left: -4px;
  font-weight: 600;
  font-size: 8.5px;
  letter-spacing: -0.3px;
}
.back {
  width: 16px;
  height: 16px;
  margin-top: 5px;
  background: #d0cfd5;
  display: flex;
  align-items: center;
  justify-content: center;
}
.panel-search {
  display: flex;
  gap: 4px;
  margin-top: 4px;
}
.search-box {
  width: 188px;
  height: 16px;
  background: #fff;
  display: flex;
  align-items: center;
  justify-content: flex-end;
  padding-right: 6px;
}
.list-button {
  width: 20px;
  height: 16px;
  background: #d0cfd5;
  display: flex;
  align-items: center;
  justify-content: center;
}
.modify {
  width: 36px;
  height: 16px;
  margin-top: auto;
  margin-bottom: 3px;
  background: #b2b1b7;
  color: #d2d1d7;
  text-align: center;
  line-height: 15px;
}
.side-tabs {
  flex: 1;
}
.side-tabs b {
  height: 19.4px;
  display: flex;
  align-items: center;
  justify-content: center;
  border-bottom: 1px solid #dad9df;
}
.side-tabs b:first-child {
  height: 23px;
}
.side-tabs svg {
  width: 12px;
  height: 12px;
}
.side-tabs .active {
  background: #00609f;
}

/* Bottom toolbar */
.bottom-tools {
  height: 26px;
  flex: none;
  padding-left: 5px;
  display: flex;
  align-items: center;
  border-top: 1px solid #fff;
  letter-spacing: -0.15px;
}
.bottom-tools b {
  width: 16px;
  height: 16px;
  background: #d2d1d7;
}
.bottom-tools b.plain {
  background: none;
}
.bottom-tools b.grey {
  background: #acabb1;
  margin-left: 1.5px;
}
.bottom-tools b.pressed {
  background: #c6c5cc;
}
.bottom-tools b.eye {
  margin-left: 2px;
}
.buttons {
  display: flex;
  gap: 1.36px;
}
.second-set {
  margin-left: 4px;
}
.snap-two {
  margin-left: 3.5px;
}
.field {
  height: 16px;
  flex: none;
  background: #fff;
  display: flex;
  align-items: center;
  gap: 1px;
}
.field .caret {
  border-width: 4px 3px 0;
}
.origin {
  width: 72px;
  padding-left: 4px;
  gap: 2px;
}
.sep {
  width: 1px;
  height: 20px;
  margin: 0 4px 0 5px;
  background: #dedde3;
}
.sep.wide {
  margin: 0 3px 0 4px;
}
.sep.tight {
  margin: 0 1px;
}
.sep.snaps {
  margin: 0 4px 0 3px;
}
.model-search {
  width: 99px;
  padding-left: 3px;
  font-style: italic;
  letter-spacing: 0;
  color: #777;
  margin-right: 3px;
}
.standard {
  width: 50px;
  margin: 0 3px 0 5px;
  padding-left: 5px;
}
.auto {
  width: 36px;
  margin-left: 5px;
  padding-left: 5px;
}
.plane {
  width: 57px;
  margin-left: 5px;
  padding-left: 5px;
}
.outline {
  width: 68px;
  margin: 0 5px 0 6px;
  padding-left: 5px;
  letter-spacing: -0.25px;
}

/* Status bar */
.statusbar {
  height: 15px;
  flex: none;
  padding-left: 810px;
  display: flex;
  align-items: center;
  background: #00609f;
  color: #fff;
  font-size: 9.8px;
  letter-spacing: 0;
  line-height: 15px;
}
.statusbar span {
  padding-top: 2px;
}
.st-o { width: 70px; }
.st-pan { width: 43px; }
.st-phase { width: 147px; }

/* Taskbar */
.taskbar {
  flex: 1;
  display: flex;
  justify-content: space-between;
  background: #222223;
  color: #fff;
  letter-spacing: 0;
}
.apps {
  display: flex;
  margin-left: -1px;
}
.apps b {
  width: 32.7px;
  height: 26px;
  padding: 3px 6px 0;
}
.apps svg {
  width: 18px;
  height: 18px;
  margin: auto;
}
.running {
  background: linear-gradient(#76b9ed, #76b9ed) 50% 100% / 27px 2px no-repeat;
}
.apps .current {
  background-color: #515355;
  background-size: 100% 2px;
}
.pdf {
  font: 700 5px "Open Sans", sans-serif;
  fill: #fff;
}
.year {
  font: 700 4px "Open Sans", sans-serif;
  fill: #fff;
}
.tray {
  width: 273px;
  display: flex;
  align-items: center;
}
.weather {
  width: 16px;
  height: 14px;
}
.temp {
  width: 52px;
  margin-left: 6px;
  font-size: 9px;
}
.tray-icons {
  width: 94px;
  height: 14px;
  margin-left: 2px;
}
.lang {
  margin-left: 3px;
  width: 22px;
  font-size: 8.5px;
  letter-spacing: -0.3px;
}
.clock {
  width: 38px;
  font-size: 8px;
  line-height: 12px;
  letter-spacing: -0.1px;
  text-align: center;
}
.notes {
  width: 20px;
  height: 18px;
  margin-left: 11px;
}
.count {
  font: 7px "Open Sans", sans-serif;
  fill: #fff;
  text-anchor: middle;
}
```
